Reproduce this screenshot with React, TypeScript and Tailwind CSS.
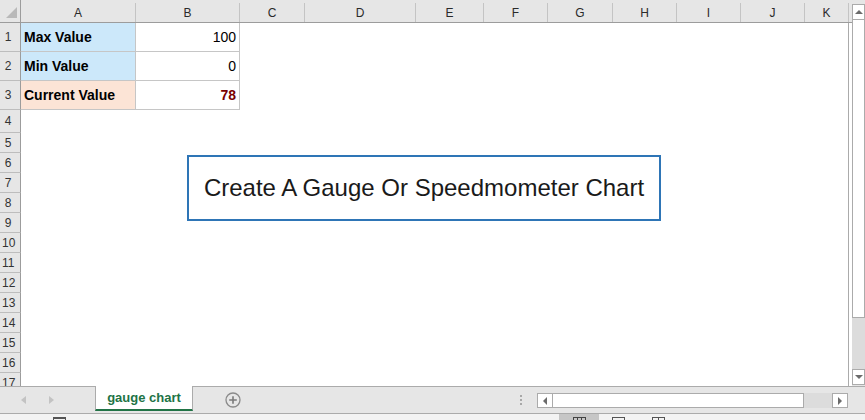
import React from 'react'

const cols: [string, number][] = [
  ['A', 115], ['B', 104], ['C', 65], ['D', 111], ['E', 68], ['F', 64],
  ['G', 65], ['H', 64], ['I', 64], ['J', 64], ['K', 44],
]

const rows: { n: number; h: string; a?: string; b?: string; aBg?: string; bold78?: boolean }[] = [
  { n: 1, h: 'h-[29px]', a: 'Max Value', b: '100', aBg: 'bg-[#cce8fa]' },
  { n: 2, h: 'h-[29px]', a: 'Min Value', b: '0', aBg: 'bg-[#cce8fa]' },
  { n: 3, h: 'h-[29px]', a: 'Current Value', b: '78', aBg: 'bg-[#fce4d6]', bold78: true },
  { n: 4, h: 'h-[23px]' },
  ...Array.from({ length: 13 }, (_, i) => ({ n: i + 5, h: 'h-[20px]' })),
]

function Tri({ dir }: { dir: 'up' | 'down' | 'left' | 'right' }) {
  const pts = {
    up: '0,4 4,0 8,4',
    down: '0,0 8,0 4,4',
    left: '4,0 4,8 0,4',
    right: '0,0 0,8 4,4',
  }[dir]
  const w = dir === 'up' || dir === 'down' ? 8 : 4
  const h = dir === 'up' || dir === 'down' ? 4 : 8
  return (
    <svg width={w} height={h} viewBox={`0 0 ${w} ${h}`}>
      <polygon points={pts} fill="#6b6b6b" />
    </svg>
  )
}

export default function App() {
  return (
    <div className="w-[865px] h-[420px] overflow-hidden bg-white flex flex-col text-[#222]"
      style={{ fontFamily: '"Liberation Sans", Arial, sans-serif' }}>
      {/* sheet area */}
      <div className="flex h-[386px]">
        <div className="w-[852px] flex flex-col">
          {/* column headers */}
          <div className="flex h-[23px] bg-[#e6e6e6] border-b border-[#9c9c9c] shrink-0">
            <div className="w-[21px] border-r border-[#9c9c9c] flex items-end justify-end pr-[3px] pb-[4px]">
              <svg width="11" height="11" viewBox="0 0 11 11">
                <polygon points="11,0 11,11 0,11" fill="#b9b9b9" />
              </svg>
            </div>
            {cols.map(([c, w]) => (
              <div key={c} className="flex items-end" style={{ width: w }}>
                <div className="w-full h-[19px] border-r border-[#c4c4c4] flex items-center justify-center text-[12px] text-[#2a2a2a]">
                  {c}
                </div>
              </div>
            ))}
          </div>

          {/* body */}
          <div className="relative flex-1 overflow-hidden">
            <div className="w-[849px] h-full border-r border-[#ababab] overflow-hidden">
              {rows.map((r) => (
                <div key={r.n} className={`flex ${r.h}`}>
                  <div className="w-[21px] shrink-0 bg-[#e6e6e6] border-r border-b border-r-[#9c9c9c] border-b-[#bdbdbd] flex items-center pl-[2px] text-[12px] text-[#333]">
                    <span className="w-[12px] text-center">{r.n}</span>
                  </div>
                  {r.a !== undefined && (
                    <>
                      <div className={`w-[115px] shrink-0 ${r.aBg} border-r border-b border-[#c6c6c6] flex items-end pl-[3px] pb-[3px] text-[14px] font-bold text-black`}>
                        {r.a}
                      </div>
                      <div className={`w-[104px] shrink-0 border-r border-b border-[#c6c6c6] flex items-end justify-end pr-[3px] pb-[3px] text-[14px] ${r.bold78 ? 'font-bold text-[#7a0000]' : 'text-black'}`}>
                        {r.b}
                      </div>
                    </>
                  )}
                </div>
              ))}
            </div>

            {/* text box shape */}
            <div className="absolute left-[187px] top-[132px] w-[474px] h-[66px] border-2 border-[#2e75b6] bg-white flex items-center justify-center text-[24px] text-[#1a1a1a]">
              Create A Gauge Or Speedmometer Chart
            </div>
          </div>
        </div>

        {/* vertical scrollbar */}
        <div className="w-[13px] bg-[#e6e6e6] flex flex-col pt-[4px] pb-px">
          <div className="h-[16px] bg-white border border-[#ababab] flex items-center justify-center">
            <Tri dir="up" />
          </div>
          <div className="h-[298px] bg-white border-x border-b border-[#ababab]" />
          <div className="flex-1 bg-[#dcdcdc]" />
          <div className="h-[16px] bg-white border border-[#ababab] flex items-center justify-center">
            <Tri dir="down" />
          </div>
        </div>
      </div>

      {/* sheet tabs bar */}
      <div className="h-[28px] shrink-0 bg-[#e6e6e6] border-t border-b border-[#ababab] flex items-start">
        <div className="w-[95px] h-full flex items-center">
          <svg width="5" height="8" viewBox="0 0 5 8" className="ml-[21px]">
            <polygon points="5,0 5,8 0,4" fill="#c3c3c3" />
          </svg>
          <svg width="5" height="8" viewBox="0 0 5 8" className="ml-[23px]">
            <polygon points="0,0 0,8 5,4" fill="#c3c3c3" />
          </svg>
        </div>
        <div className="-mt-px w-[98px] h-[25px] bg-white border-x border-[#ababab] border-b-2 border-b-[#217346] flex items-center justify-center text-[13px] font-bold text-[#217346]">
          gauge chart
        </div>
        <div className="h-full flex items-center ml-[32px]">
          <svg width="16" height="16" viewBox="0 0 16 16">
            <circle cx="8" cy="8" r="7" fill="none" stroke="#8a8a8a" strokeWidth="1.3" />
            <path d="M8 4.2v7.6M4.2 8h7.6" stroke="#7a7a7a" strokeWidth="1.6" />
          </svg>
        </div>
        <div className="h-full flex flex-col justify-center gap-[2px] ml-[279px]">
          <span className="w-[2px] h-[2px] bg-[#a8a8a8]" />
          <span className="w-[2px] h-[2px] bg-[#a8a8a8]" />
          <span className="w-[2px] h-[2px] bg-[#a8a8a8]" />
        </div>
        {/* horizontal scrollbar */}
        <div className="ml-[15px] mt-[6px] h-[15px] w-[311px] flex">
          <div className="w-[16px] bg-white border border-[#ababab] flex items-center justify-center">
            <Tri dir="left" />
          </div>
          <div className="w-[251px] bg-white border-y border-r border-[#ababab]" />
          <div className="flex-1 bg-[#dcdcdc]" />
          <div className="w-[16px] bg-white border border-[#ababab] flex items-center justify-center">
            <Tri dir="right" />
          </div>
        </div>
      </div>

      {/* status bar */}
      <div className="flex-1 bg-[#f3f3f3] flex overflow-hidden">
        <div className="ml-[53px] mt-[3px] w-[13px] h-[6px] border-t-2 border-x border-[#555]" />
        <div className="ml-[493px] w-[40px] h-full bg-[#c6c6c6] flex justify-center">
          <div className="mt-[3px] w-[13px] h-[6px] border-t border-x border-[#444] flex justify-evenly">
            <span className="w-px h-full bg-[#444]" />
            <span className="w-px h-full bg-[#444]" />
          </div>
        </div>
        <div className="ml-[13px] mt-[3px] w-[13px] h-[6px] border-t border-x border-[#555]" />
        <div className="ml-[27px] mt-[3px] w-[13px] h-[6px] border-t border-x border-[#555] flex justify-center">
          <span className="w-px h-full bg-[#555]" />
        </div>
      </div>
    </div>
  )
}
